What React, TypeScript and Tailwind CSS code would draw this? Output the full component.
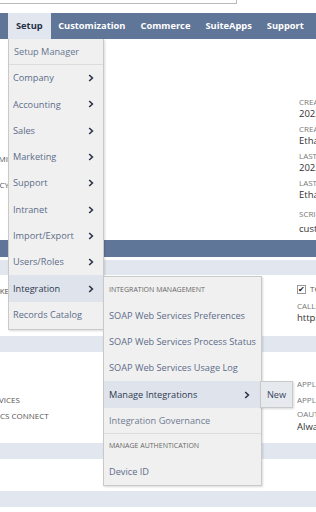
import React from "react";

const tabs = ["Setup", "Customization", "Commerce", "SuiteApps", "Support"];

const setupItems = [
  "Company",
  "Accounting",
  "Sales",
  "Marketing",
  "Support",
  "Intranet",
  "Import/Export",
  "Users/Roles",
  "Integration",
];

function Chevron({ className = "" }: { className?: string }) {
  return (
    <svg width="6" height="8" viewBox="0 0 6 8" className={className}>
      <path d="M1.2 1 L4.4 4 L1.2 7" fill="none" stroke="#2c3548" strokeWidth="1.6" />
    </svg>
  );
}

function Field({ label, value, gap = "mb-[3px]" }: { label: string; value: string; gap?: string }) {
  return (
    <div className={gap}>
      <div className="h-[11px] text-[8px] leading-[11px] text-[#777] uppercase">{label}</div>
      <div className="h-[13px] text-[9.5px] leading-[13px] text-[#333]">{value}</div>
    </div>
  );
}

// label whose start is scrolled off the left edge; only its tail shows
function Tail({ text, w = "w-[8px]" }: { text: string; w?: string }) {
  return (
    <div className={`${w} overflow-hidden flex justify-end whitespace-nowrap`}>
      <span>{text}</span>
    </div>
  );
}

export default function App() {
  return (
    <div className="relative w-[316px] h-[512px] overflow-hidden bg-white font-['Open_Sans',sans-serif]">
      {/* search box edge */}
      <div className="h-[13px]">
        <div className="w-[237px] h-[4px] border-b border-r border-[#b9b9b9]" />
      </div>

      {/* nav */}
      <div className="flex h-[26px] bg-[#607698] pl-[8px] whitespace-nowrap">
        {tabs.map((t, i) => (
          <div
            key={t}
            className={
              i === 0
                ? "flex items-center px-[8px] bg-[#e2e7ef] text-[#263247] text-[9.3px] font-bold"
                : "flex items-center px-[7.5px] text-white text-[9.3px] font-bold"
            }
          >
            {t}
          </div>
        ))}
      </div>

      {/* page body */}
      <div className="relative">
        <div className="flex h-[201px]">
          <div className="flex-1 pt-[113px] text-[8px] text-[#555] uppercase">
            <div className="h-[13px] leading-[13px]">
              <Tail text="SUBMI" />
            </div>
            <div className="h-[13px]" />
            <div className="h-[13px] leading-[13px]">
              <Tail text="POLICY" w="w-[9px]" />
            </div>
          </div>
          <div className="w-[17px] pt-[57px] whitespace-nowrap overflow-hidden">
            <Field label="Created" value="2022-01-01" />
            <Field label="Created By" value="Ethan" />
            <Field label="Last Modified" value="2022-01-01" />
            <Field label="Last Modified By" value="Ethan" gap="mb-[6px]" />
            <div className="h-[13px] text-[8px] leading-[13px] text-[#777] uppercase">Script</div>
            <div className="mt-[2px] h-[13px] text-[9.5px] leading-[13px] text-[#333]">customscript</div>
          </div>
        </div>

        <div className="h-[17px] bg-[#607698]" />
        <div className="h-[3px]" />
        <div className="h-[15px] bg-[#e1e6ef]" />

        <div className="flex h-[61px]">
          <div className="flex-1 pt-[10px] text-[8px] text-[#555] uppercase">
            <Tail text="KE" w="w-[9px]" />
          </div>
          <div className="w-[19px] pt-[8px] whitespace-nowrap overflow-hidden">
            <div className="flex items-center gap-[4px] h-[12px]">
              <div className="w-[9px] h-[9px] border border-[#999] bg-white flex items-center justify-center text-[8px] leading-none text-[#222]">
                ✔
              </div>
              <span className="text-[8px] text-[#555] uppercase">Token</span>
            </div>
            <div className="mt-[5px] h-[11px] text-[8px] leading-[11px] text-[#777] uppercase">Callback</div>
            <div className="h-[13px] text-[9.5px] leading-[13px] text-[#333]">https</div>
          </div>
        </div>

        <div className="h-[16px] bg-[#e1e6ef]" />

        <div className="flex h-[91px]">
          <div className="flex-1 pt-[40px] text-[8px] text-[#555] uppercase whitespace-nowrap">
            <div className="h-[16px] leading-[16px] -ml-[1px]">VICES</div>
            <div className="h-[16px] leading-[16px]">CS CONNECT</div>
          </div>
          <div className="w-[19px] pt-[24px] whitespace-nowrap overflow-hidden text-[8px] text-[#777] uppercase">
            <div className="h-[16px] leading-[16px]">Application</div>
            <div className="h-[16px] leading-[16px]">Application</div>
            <div className="h-[12px] leading-[12px]">OAuth</div>
            <div className="h-[13px] leading-[13px] text-[9.5px] text-[#333] normal-case">Always</div>
          </div>
        </div>

        <div className="h-[16px] bg-[#e1e6ef]" />
        <div className="h-[32px]" />
        <div className="h-[16px] bg-[#e1e6ef]" />

        {/* Setup dropdown */}
        <div className="absolute left-[8px] top-0 w-[96px] bg-[#f0f0f0] border border-t-0 border-[#c9c9c9] shadow-[1px_1px_2px_rgba(0,0,0,0.15)] text-[9.2px] whitespace-nowrap">
          <div className="h-[26px] flex items-center px-[5px] text-[#667590] border-b border-[#dcdcdc]">
            Setup Manager
          </div>
          {setupItems.map((it) => (
            <div
              key={it}
              className={
                it === "Integration"
                  ? "h-[26.3px] flex items-center justify-between pl-[4px] pr-[9px] bg-[#dfe4ec] text-[#2f3a50]"
                  : "h-[26.3px] flex items-center justify-between pl-[4px] pr-[9px] text-[#5c6c8a]"
              }
            >
              <span>{it}</span>
              <Chevron />
            </div>
          ))}
          <div className="h-[27px] flex items-center px-[4px] text-[#5c6c8a]">Records Catalog</div>
        </div>

        {/* Integration submenu */}
        <div className="absolute left-[103px] top-[237px] w-[159px] bg-[#f0f0f0] border border-[#c9c9c9] shadow-[1px_1px_2px_rgba(0,0,0,0.15)] text-[9.2px] whitespace-nowrap">
          <div className="h-[26px] flex items-center px-[5px] text-[7px] text-[#666] uppercase">
            Integration Management
          </div>
          <div className="h-[26px] flex items-center px-[5px] text-[#5c6c8a]">SOAP Web Services Preferences</div>
          <div className="h-[26px] flex items-center px-[5px] text-[#5c6c8a]">SOAP Web Services Process Status</div>
          <div className="h-[26px] flex items-center px-[5px] text-[#5c6c8a]">SOAP Web Services Usage Log</div>
          <div className="h-[27px] flex items-center justify-between pl-[5px] pr-[11px] bg-[#dfe4ec] text-[#2f3a50]">
            <span>Manage Integrations</span>
            <Chevron />
          </div>
          <div className="h-[26px] flex items-center px-[5px] text-[#6f7b92] border-b border-[#dcdcdc]">
            Integration Governance
          </div>
          <div className="h-[25px] flex items-center px-[5px] text-[7px] text-[#666] uppercase">
            Manage Authentication
          </div>
          <div className="h-[26px] flex items-center px-[5px] text-[#5c6c8a]">Device ID</div>
        </div>

        {/* New flyout */}
        <div className="absolute left-[260px] top-[342px] w-[33px] h-[27px] bg-[#e6e9ee] border border-[#c9c9c9] shadow-[1px_1px_2px_rgba(0,0,0,0.15)] flex items-center justify-center text-[9.2px] text-[#3b4660]">
          New
        </div>
      </div>
    </div>
  );
}
